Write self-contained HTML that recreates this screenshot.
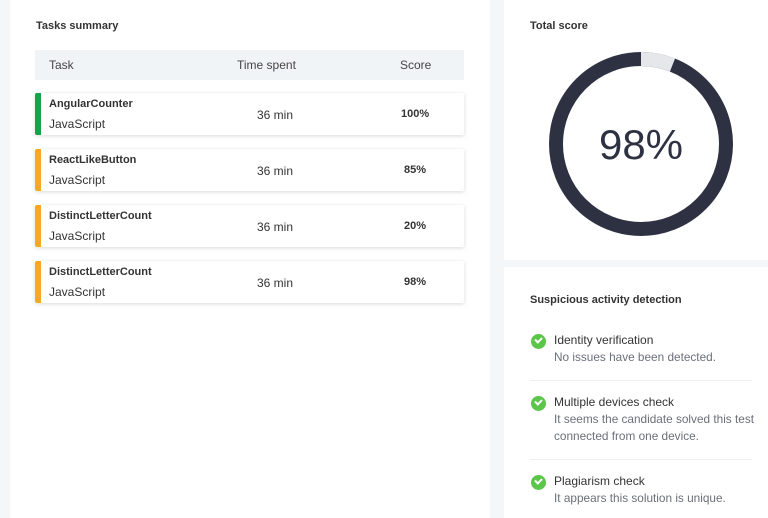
<!DOCTYPE html><html><head><style>
body{margin:0;width:768px;height:518px;background:#f5f6f8;font-family:"Liberation Sans",sans-serif;position:relative;overflow:hidden;color:#2e3142}
.card{position:absolute;background:#fff}
.h{font-size:11px;font-weight:bold;position:absolute;color:#333}
.thead{position:absolute;left:35px;top:50px;width:429px;height:30px;background:#f1f4f7;font-size:12px;color:#444}
.row{position:absolute;left:35px;width:429px;height:42px;background:#fff;box-shadow:0 1px 4px rgba(0,0,0,.15);border-radius:2px;font-size:12px;color:#333}
.bar{position:absolute;left:0;top:0;width:6px;height:42px;border-radius:2px 0 0 2px}
.n{position:absolute;left:14px;top:5px;font-size:11px;font-weight:bold;color:#333}
.l{position:absolute;left:14px;top:24px}
.t{position:absolute;left:222px;top:15px}
.s{position:absolute;left:366px;top:15px;font-weight:bold;font-size:11px}
.item{position:absolute;left:554px;font-size:12px;line-height:17px;color:#333}
.item span{color:#6b6f7a;font-size:11.8px}
.ck{position:absolute;left:531px;width:15px;height:15px;border-radius:50%;background:#5cc64a}
.ck:after{content:"";position:absolute;left:4px;top:3px;width:5px;height:3px;border-left:2px solid #fff;border-bottom:2px solid #fff;transform:rotate(-45deg)}
.sep{position:absolute;left:530px;width:222px;height:1px;background:#eceef1}
</style></head><body>
<div class="card" style="left:10px;top:0;width:480px;height:518px"></div>
<div class="card" style="left:504px;top:0;width:264px;height:260px"></div>
<div class="card" style="left:504px;top:267px;width:264px;height:251px"></div>
<div class="h" style="left:36px;top:20px">Tasks summary</div>
<div class="thead"><span style="position:absolute;left:14px;top:8px">Task</span><span style="position:absolute;left:202px;top:8px">Time spent</span><span style="position:absolute;left:365px;top:8px">Score</span></div>
<div class="row" style="top:93px"><div class="bar" style="background:#16a34a"></div><div class="n">AngularCounter</div><div class="l">JavaScript</div><div class="t">36 min</div><div class="s">100%</div></div>
<div class="row" style="top:149px"><div class="bar" style="background:#f9a826"></div><div class="n">ReactLikeButton</div><div class="l">JavaScript</div><div class="t">36 min</div><div class="s" style="left:369px">85%</div></div>
<div class="row" style="top:205px"><div class="bar" style="background:#f9a826"></div><div class="n">DistinctLetterCount</div><div class="l">JavaScript</div><div class="t">36 min</div><div class="s" style="left:369px">20%</div></div>
<div class="row" style="top:261px"><div class="bar" style="background:#f9a826"></div><div class="n">DistinctLetterCount</div><div class="l">JavaScript</div><div class="t">36 min</div><div class="s" style="left:369px">98%</div></div>
<div class="h" style="left:530px;top:20px">Total score</div>
<svg style="position:absolute;left:541px;top:44px" width="200" height="200" viewBox="0 0 200 200">
<circle cx="100" cy="100" r="85" fill="none" stroke="#2e3142" stroke-width="14"/>
<path d="M100 15 A85 85 0 0 1 131.5 21" fill="none" stroke="#e5e7eb" stroke-width="14"/>
<text x="100" y="115" text-anchor="middle" font-size="42" font-family="Liberation Sans" fill="#2e3142">98%</text>
</svg>
<div class="h" style="left:530px;top:294px">Suspicious activity detection</div>
<div class="ck" style="top:334px"></div><div class="item" style="top:332px">Identity verification<br><span>No issues have been detected.</span></div>
<div class="sep" style="top:380px"></div>
<div class="ck" style="top:396px"></div><div class="item" style="top:394px">Multiple devices check<br><span>It seems the candidate solved this test<br>connected from one device.</span></div>
<div class="sep" style="top:459px"></div>
<div class="ck" style="top:475px"></div><div class="item" style="top:473px">Plagiarism check<br><span>It appears this solution is unique.</span></div>
</body></html>
